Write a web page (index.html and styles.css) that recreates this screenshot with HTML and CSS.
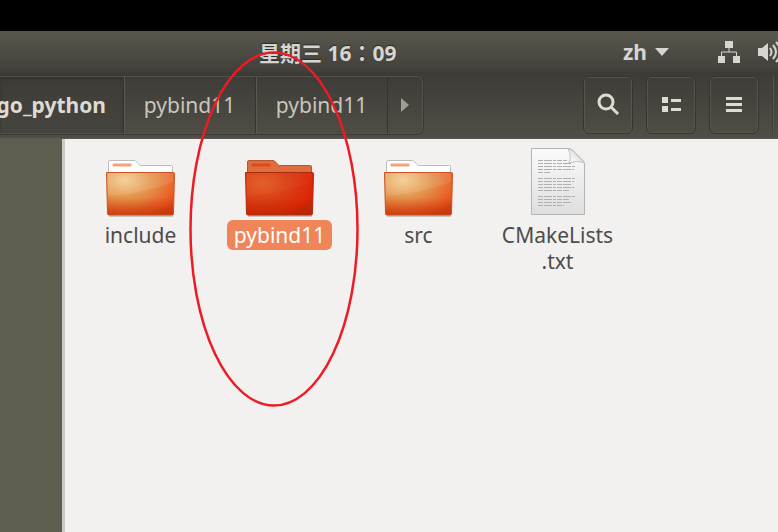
FILE: index.html
```html
<!DOCTYPE html>
<html lang="zh">
<head>
    <meta charset="UTF-8">
    <meta name="viewport" content="width=device-width, initial-scale=1.0">
    <title>pybind11</title>
    <link rel="stylesheet" href="styles.css">
</head>
<body>
    <!-- shared gradients and the folder drawing -->
    <svg class="defs" width="0" height="0" aria-hidden="true">
        <defs>
            <radialGradient id="orange" cx="0.27" cy="0.18" r="0.95">
                <stop offset="0" stop-color="#f3cd91"/>
                <stop offset="0.45" stop-color="#e39249"/>
                <stop offset="0.85" stop-color="#ea5620"/>
                <stop offset="1" stop-color="#d94514"/>
            </radialGradient>
            <radialGradient id="red" cx="0.25" cy="0.25" r="0.85">
                <stop offset="0" stop-color="#e35b24"/>
                <stop offset="0.55" stop-color="#d93a12"/>
                <stop offset="0.9" stop-color="#de2405"/>
                <stop offset="1" stop-color="#c82307"/>
            </radialGradient>
            <linearGradient id="shade" x1="0" y1="0" x2="0" y2="1">
                <stop offset="0.6" stop-color="#b02a00" stop-opacity="0"/>
                <stop offset="1" stop-color="#b02a00" stop-opacity="0.5"/>
            </linearGradient>
            <linearGradient id="paper" x1="0" y1="0" x2="0" y2="1">
                <stop offset="0" stop-color="#fbfbfb"/>
                <stop offset="1" stop-color="#dedede"/>
            </linearGradient>
            <linearGradient id="fold" x1="0" y1="1" x2="1" y2="0">
                <stop offset="0" stop-color="#ffffff"/>
                <stop offset="0.5" stop-color="#e8e8e8"/>
                <stop offset="1" stop-color="#b5b5b5"/>
            </linearGradient>
            <g id="front-shape">
                <path d="M1.5 24.500h67q1 0 1 1l-1 40q0 1.500-1.500 1.500h-63q-1.500 0-1.500-1.500l-1-41z"/>
            </g>
        </defs>
    </svg>

    <div class="blank"></div>
    <header class="panel">
        <time class="clock" lang="zh-TW">星期三 16：09</time>
        <div class="status">
            <button class="lang" type="button">zh
                <svg width="14" height="8" viewBox="0 0 14 8" aria-hidden="true"><path d="M0 0h14L7 8z" fill="currentColor"/></svg>
            </button>
            <svg class="network" width="24" height="24" viewBox="0 0 24 24" aria-hidden="true">
                <path d="M8 1h8v7H8zM1 16h7v7H1zM16 16h7v7h-7z" fill="currentColor"/>
                <path d="M12 8v4M4.500 16v-4h15v4" fill="none" stroke="currentColor"/>
            </svg>
            <svg class="volume" width="28" height="22" viewBox="0 0 28 22" aria-hidden="true">
                <path d="M0 7h4l6-5v18l-6-5H0z" fill="currentColor"/>
                <path d="M12 7q3 4 0 8M15 4q6 7 0 14M18 1q9 10 0 20" fill="none" stroke="currentColor" stroke-width="2"/>
            </svg>
        </div>
    </header>

    <div class="toolbar">
        <nav class="path">
            <a class="crumb current" href="#">go_python</a>
            <a class="crumb" href="#">pybind11</a>
            <a class="crumb" href="#">pybind11</a>
            <button class="next" type="button" aria-label="Next">
                <svg width="8" height="14" viewBox="0 0 8 14" aria-hidden="true"><path d="M0 0v14l8-7z" fill="#a09d94"/></svg>
            </button>
        </nav>
        <div class="tools">
            <button class="tool" type="button" aria-label="Search">
                <svg width="24" height="24" viewBox="0 0 24 24" fill="none" stroke="#dfdbd2" aria-hidden="true">
                    <circle cx="10" cy="9" r="7" stroke-width="3"/>
                    <path d="M15 14l7 7" stroke-width="3"/>
                </svg>
            </button>
            <button class="tool" type="button" aria-label="List view">
                <svg width="20" height="16" viewBox="0 0 20 16" fill="#dfdbd2" aria-hidden="true">
                    <path d="M1 0h6v6H1zM10 2h10v3H10zM1 9h6v6H1zM10 11h10v3H10z"/>
                </svg>
            </button>
            <button class="tool" type="button" aria-label="Menu">
                <svg width="16" height="16" viewBox="0 0 16 16" fill="#dfdbd2" aria-hidden="true">
                    <path d="M0 0h16v3H0zM0 6h16v3H0zM0 12h16v3H0z"/>
                </svg>
            </button>
            <span class="separator"></span>
        </div>
    </div>

    <div class="window">
        <aside class="sidebar"></aside>
        <main class="files">
            <a class="file" href="#">
                <svg width="72" height="70" viewBox="0 0 72 70" aria-hidden="true">
                    <path d="M4 68h64" stroke="#c8c4c0" stroke-width="2"/>
                    <path d="M3.500 26V14q0-1.500 1.500-1.500h25l5 5h31.500q1 0 1 1V26z" fill="#fff" stroke="#bdbdbd"/>
                    <path d="M8 16h18v2H8z" fill="#f2a477" stroke="#f2a477"/>
                    <use href="#front-shape" fill="url(#orange)"/>
                    <path d="M3 25h65v9Q36 46 3 48z" fill="#fff" opacity="0.1"/>
                    <use href="#front-shape" fill="url(#shade)" stroke="#c95325"/>
                </svg>
                <span class="name">include</span>
            </a>
            <a class="file selected" href="#">
                <svg width="72" height="70" viewBox="0 0 72 70" aria-hidden="true">
                    <path d="M4 68h64" stroke="#c8c4c0" stroke-width="2"/>
                    <path d="M3.500 26V14q0-1.500 1.500-1.500h25l5 5h31.500q1 0 1 1V26z" fill="#e06d3e" stroke="#b9572f"/>
                    <path d="M8 16h18v2H8z" fill="#de4a20" stroke="#de4a20"/>
                    <use href="#front-shape" fill="url(#red)"/>
                    <path d="M3 25h65v9Q36 46 3 48z" fill="#fff" opacity="0.03"/>
                    <use href="#front-shape" fill="url(#shade)" stroke="#a92b0b"/>
                </svg>
                <span class="name">pybind11</span>
            </a>
            <a class="file" href="#">
                <svg width="72" height="70" viewBox="0 0 72 70" aria-hidden="true">
                    <path d="M4 68h64" stroke="#c8c4c0" stroke-width="2"/>
                    <path d="M3.500 26V14q0-1.500 1.500-1.500h25l5 5h31.500q1 0 1 1V26z" fill="#fff" stroke="#bdbdbd"/>
                    <path d="M8 16h18v2H8z" fill="#f2a477" stroke="#f2a477"/>
                    <use href="#front-shape" fill="url(#orange)"/>
                    <path d="M3 25h65v9Q36 46 3 48z" fill="#fff" opacity="0.1"/>
                    <use href="#front-shape" fill="url(#shade)" stroke="#c95325"/>
                </svg>
                <span class="name">src</span>
            </a>
            <a class="file" href="#">
                <svg width="72" height="70" viewBox="0 0 72 70" aria-hidden="true">
                    <path d="M9.500.5h37q2 0 4 1.500l10 10q2 2 2 4v50.500h-53z" fill="url(#paper)" stroke="#b4b4b4"/>
                    <path d="M46 1q4 7 1 14 8-3 15-.5L50 2z" fill="url(#fold)" stroke="#c2c2c2"/>
                    <g stroke="#b0b0b0" stroke-dasharray="5 1 8 1 3 1">
                        <path d="M16 12.500h29M16 15.500h33M16 18.500h38M16 21.500h36M16 24.500h12"/>
                        <path d="M16 30.500h38M16 33.500h36M16 36.500h33M16 39.500h36M16 42.500h31"/>
                        <path d="M16 48.500h38M16 51.500h31M16 54.500h34M16 57.500h26"/>
                    </g>
                </svg>
                <span class="name">CMakeLists<br>.txt</span>
            </a>
        </main>
    </div>

    <svg class="marker" width="172" height="358" viewBox="0 0 172 358" aria-hidden="true">
        <ellipse cx="86" cy="179" rx="83.500" ry="176.500" fill="none" stroke="#ed1c24" stroke-width="2.500"/>
    </svg>
</body>
</html>
```

FILE: styles.css
```css
html, body {
    margin: 0;
    padding: 0;
    height: 100%;
}
body {
    display: flex;
    flex-direction: column;
    position: relative;
    overflow: hidden;
    background-color: #f2f1ef;
    font-family: "Noto Sans", "Noto Sans CJK TC", sans-serif;
    font-size: 21px;
    color: #4c4c4c;
}
a {
    color: inherit;
    text-decoration: none;
}
button {
    margin: 0;
    padding: 0;
    border: none;
    background: none;
    font: inherit;
    color: inherit;
}
svg {
    display: block;
    flex: none;
}
.defs {
    position: absolute;
}
.blank {
    flex: none;
    height: 31px;
    background-color: #000;
}

/* top panel */
.panel {
    flex: none;
    display: flex;
    justify-content: space-between;
    align-items: center;
    height: 41px;
    padding-left: 259px;
    overflow: hidden;
    background: linear-gradient(#59574d, #403f3a);
    color: #d6d5d1;
    font-weight: bold;
    text-shadow: 0 -1px 1px #2c2b28;
}
.clock {
    white-space: nowrap;
}
.status {
    display: flex;
    align-items: center;
    margin-right: -8px;
}
.lang {
    display: flex;
    align-items: center;
    gap: 8px;
}
.network {
    margin-left: 48px;
    margin-right: 17px;
}

/* path bar and view buttons */
.toolbar {
    flex: none;
    display: flex;
    justify-content: space-between;
    height: 67px;
    box-sizing: border-box;
    padding: 4px 0;
    background: linear-gradient(#3c3b37, #504e46);
    border-bottom: 1px solid #5b594f;
    color: #dfdbd2;
}
.path {
    display: flex;
    min-width: 0;
    border: 1px solid #53514a;
    border-left: none;
    border-radius: 0 6px 6px 0;
    box-shadow: 0 0 0 1px #3a3934;
}
.crumb {
    display: flex;
    align-items: center;
    justify-content: center;
    width: 132px;
    border-right: 1px solid #35342f;
    box-shadow: inset 1px 0 #5b594f;
    box-sizing: border-box;
    color: #c9c6bd;
}
.current {
    justify-content: flex-end;
    width: 124px;
    padding-right: 17px;
    background: linear-gradient(#3e3c38, #46443e);
    box-shadow: inset 0 2px 3px #33322e;
    font-weight: bold;
    color: #dfdbd2;
}
.next {
    display: flex;
    align-items: center;
    justify-content: center;
    width: 34px;
}
.tools {
    display: flex;
    gap: 13px;
}
.tool {
    display: flex;
    align-items: center;
    justify-content: center;
    width: 50px;
    border: 1px solid #35342f;
    border-radius: 6px;
    box-shadow: inset 0 0 0 1px #57554c;
}
.separator {
    width: 5px;
    border-left: 1px solid #3e3d38;
    box-shadow: inset 1px 0 #57554c;
}

/* file list */
.window {
    flex: 1;
    display: flex;
}
.sidebar {
    flex: none;
    width: 62px;
    background-color: #605e50;
    border-right: 3px solid #cbcac7;
}
.files {
    flex: 1;
    display: flex;
    align-items: flex-start;
    padding: 9px 6px;
}
.file {
    display: flex;
    flex-direction: column;
    align-items: center;
    width: 139px;
}
.name {
    margin-top: 2px;
    padding: 2px 7px;
    border-radius: 6px;
    line-height: 26px;
    text-align: center;
}
.selected .name {
    background-color: #f08559;
    color: #fff;
}

/* ellipse drawn round the selected folder */
.marker {
    position: absolute;
    left: 188px;
    top: 50px;
}
```
